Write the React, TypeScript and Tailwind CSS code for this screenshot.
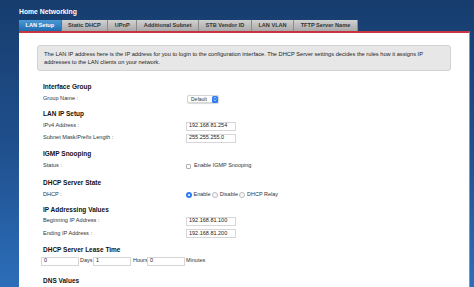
import React from "react";

const tabs = [
  "LAN Setup",
  "Static DHCP",
  "UPnP",
  "Additional Subnet",
  "STB Vendor ID",
  "LAN VLAN",
  "TFTP Server Name",
];

function Header({ children, className }: { children: React.ReactNode; className: string }) {
  return (
    <div className={`flex items-center pl-[6px] text-[6.5px] font-bold text-[#111] leading-none ${className}`}>
      {children}
    </div>
  );
}

function Row({ label, children, className }: { label: string; children?: React.ReactNode; className: string }) {
  return (
    <div className={`flex items-center ${className}`}>
      <div className="w-[149px] pl-[6px] text-[5.6px] text-[#333] leading-none">{label}</div>
      <div className="flex items-center">{children}</div>
    </div>
  );
}

function TextInput({ value, w = "w-[50px]" }: { value: string; w?: string }) {
  return (
    <div className={`${w} h-[9px] border border-[#d6d6d6] bg-white flex items-center pl-[2px] text-[5.5px] text-[#222] leading-none`}>
      {value}
    </div>
  );
}

function Radio({ checked }: { checked?: boolean }) {
  return checked ? (
    <span className="w-[6px] h-[6px] rounded-full bg-[#2d7cf2] flex items-center justify-center mr-[1.5px]">
      <span className="w-[2px] h-[2px] rounded-full bg-white" />
    </span>
  ) : (
    <span className="w-[6px] h-[6px] rounded-full border border-[#bcbcbc] bg-[#f7f7f7] mr-[1.5px]" />
  );
}

export default function App() {
  return (
    <div className="w-[474px] h-[287px] overflow-hidden flex flex-col pl-[19px] pr-[4px] bg-gradient-to-b from-[#173d6e] via-[#1f4f8c] to-[#2c6eba] font-['Liberation_Sans',Arial,sans-serif]">
      <div className="h-[21px] flex items-center pt-[4px] text-[6.8px] font-bold text-white leading-none">
        Home Networking
      </div>
      <div className="h-[11px] flex items-stretch">
        {tabs.map((t, i) => (
          <div
            key={t}
            className={
              i === 0
                ? "px-[6.5px] flex items-center text-[5.6px] font-bold leading-none text-white bg-gradient-to-b from-[#4a9ad6] to-[#1f6db0] border-r border-[#5f6f80]"
                : "px-[6.5px] flex items-center text-[5.6px] font-bold leading-none text-[#333] bg-gradient-to-b from-[#d2d2d2] to-[#a9a9a9] border-r border-[#8b8b8b]"
            }
          >
            {t}
          </div>
        ))}
      </div>
      <div className="w-[451px] flex-1 bg-white border-t-2 border-t-[#c7343f] border-r border-r-[#8796ab] px-[18px] pt-[12px]">
        <div className="h-[26px] rounded-[3px] bg-[#e7e7e7] border border-[#d3d3d3] pl-[6px] pr-[12px] py-[4px] text-[5.7px] leading-[8px] text-[#222]">
          The LAN IP address here is the IP address for you to login to the configuration interface. The DHCP Server settings decides the rules how it assigns IP addresses to the LAN clients on your network.
        </div>

        <Header className="mt-[10px] h-[12px]">Interface Group</Header>
        <Row label="Group Name :" className="h-[12px]">
          <div className="ml-[1px] w-[32px] h-[8px] rounded-[2px] border border-[#d6d6d6] bg-white flex items-center justify-between pl-[3px] text-[5px] text-[#333] leading-none shadow-[0_0.5px_1px_rgba(0,0,0,0.15)]">
            <span>Default</span>
            <span className="w-[6px] h-[7px] rounded-[1.5px] bg-[#2f7df3] flex items-center justify-center">
              <svg width="4" height="6" viewBox="0 0 4 6">
                <path d="M0.8 2.4 L2 1.1 L3.2 2.4 M0.8 3.6 L2 4.9 L3.2 3.6" stroke="white" strokeWidth="0.6" fill="none" />
              </svg>
            </span>
          </div>
        </Row>

        <Header className="mt-[4px] h-[11px]">LAN IP Setup</Header>
        <Row label="IPv4 Address :" className="h-[12px]">
          <TextInput value="192.168.81.254" />
        </Row>
        <Row label="Subnet Mask/Prefix Length :" className="h-[12px]">
          <TextInput value="255.255.255.0" />
        </Row>

        <Header className="mt-[5px] h-[11px]">IGMP Snooping</Header>
        <Row label="Status :" className="h-[12px]">
          <span className="w-[5px] h-[5px] rounded-[1px] border border-[#b0b0b0] bg-white mr-[3px]" />
          <span className="text-[5.5px] text-[#333] leading-none">Enable IGMP Snooping</span>
        </Row>

        <Header className="mt-[6px] h-[11px]">DHCP Server State</Header>
        <Row label="DHCP :" className="h-[12px]">
          <Radio checked />
          <span className="text-[5.5px] text-[#333] leading-none mr-[1.5px]">Enable</span>
          <Radio />
          <span className="text-[5.5px] text-[#333] leading-none mr-[1.5px]">Disable</span>
          <Radio />
          <span className="text-[5.5px] text-[#333] leading-none">DHCP Relay</span>
        </Row>

        <Header className="mt-[5px] h-[9px]">IP Addressing Values</Header>
        <Row label="Beginning IP Address :" className="h-[12px]">
          <TextInput value="192.168.81.100" />
        </Row>
        <Row label="Ending IP Address :" className="h-[13px]">
          <TextInput value="192.168.81.200" />
        </Row>

        <Header className="mt-[5px] h-[11px]">DHCP Server Lease Time</Header>
        <div className="h-[10px] flex items-center pl-[4px] text-[5.5px] text-[#333] leading-none">
          <TextInput value="0" w="w-[38px]" />
          <span className="ml-[1px] w-[13px]">Days</span>
          <TextInput value="1" w="w-[38px]" />
          <span className="ml-[2px] w-[14px]">Hours</span>
          <TextInput value="0" w="w-[38px]" />
          <span className="ml-[1px]">Minutes</span>
        </div>

        <Header className="mt-[9px] h-[12px]">DNS Values</Header>
      </div>
    </div>
  );
}
